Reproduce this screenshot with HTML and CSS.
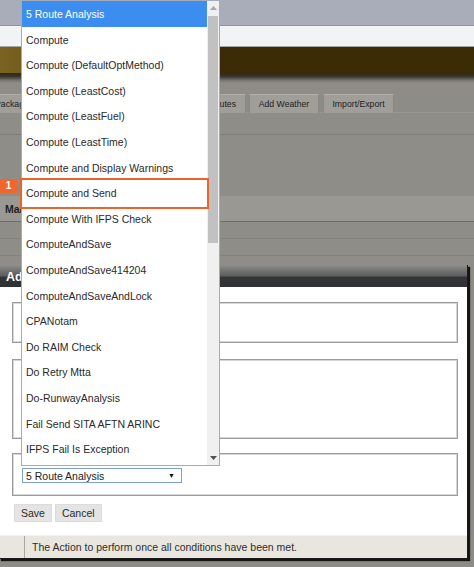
FILE: index.html
```html
<!DOCTYPE html>
<html>
<head>
<meta charset="utf-8">
<link rel="stylesheet" href="styles.css">
</head>
<body>
<div class="page">
  <div class="topbar"></div>
  <div class="lightbar"></div>
  <div class="brandbar"></div>
  <div class="brandfade"></div>
  <div class="tabstrip">
    <div class="tab tab-a">Packages</div>
    <div class="tab tab-b">Flight Plans</div>
    <div class="tab tab-c">Compare Routes</div>
    <div class="tab tab-d">Add Weather</div>
    <div class="tab tab-e">Import/Export</div>
  </div>
  <div class="content">
    <div class="subbar"></div>
    <div class="badge-row"><span class="badge">1</span></div>
    <div class="grid-head">Manage Actions</div>
    <div class="grid-row"></div>
    <div class="grid-row"></div>
  </div>
</div>

<div class="dialog">
  <div class="dialog-title">Add Action</div>
  <div class="dialog-body">
    <div class="box box-1"></div>
    <div class="box box-2"></div>
    <div class="box box-3">
      <div class="select">
        <span>5 Route Analysis</span>
        <span class="select-arrow">&#9660;</span>
      </div>
    </div>
    <div class="buttons">
      <button class="btn">Save</button>
      <button class="btn">Cancel</button>
    </div>
  </div>
  <div class="status">
    <div class="status-cell"></div>
    <div class="status-text">The Action to perform once all conditions have been met.</div>
  </div>
</div>

<div class="dropdown">
  <div class="options">
    <div class="opt selected">5 Route Analysis</div>
    <div class="opt">Compute</div>
    <div class="opt">Compute (DefaultOptMethod)</div>
    <div class="opt">Compute (LeastCost)</div>
    <div class="opt">Compute (LeastFuel)</div>
    <div class="opt">Compute (LeastTime)</div>
    <div class="opt">Compute and Display Warnings</div>
    <div class="opt">Compute and Send</div>
    <div class="opt">Compute With IFPS Check</div>
    <div class="opt">ComputeAndSave</div>
    <div class="opt">ComputeAndSave414204</div>
    <div class="opt">ComputeAndSaveAndLock</div>
    <div class="opt">CPANotam</div>
    <div class="opt">Do RAIM Check</div>
    <div class="opt">Do Retry Mtta</div>
    <div class="opt">Do-RunwayAnalysis</div>
    <div class="opt">Fail Send SITA AFTN ARINC</div>
    <div class="opt">IFPS Fail Is Exception</div>
  </div>
  <div class="scrollbar">
    <svg class="arrow-up" width="7" height="4" viewBox="0 0 7 4"><path d="M0 4 L3.5 0 L7 4 Z" fill="#a8a8a8"/></svg>
    <div class="thumb"></div>
    <svg class="arrow-down" width="7" height="4" viewBox="0 0 7 4"><path d="M0 0 L3.5 4 L7 0 Z" fill="#505050"/></svg>
  </div>
</div>

<div class="callout"></div>
</body>
</html>
```

FILE: styles.css
```css
html, body {
  margin: 0;
  padding: 0;
}
body {
  width: 474px;
  height: 567px;
  overflow: hidden;
  position: relative;
  background: #8e8c87;
  font-family: "Liberation Sans", Arial, sans-serif;
  font-size: 10.5px;
  color: #2e2e2e;
}
.page {
  width: 474px;
}
.topbar {
  height: 25px;
  background: #a9adb9;
}
.lightbar {
  height: 20px;
  background: #f2f3f5;
  border-top: 1px solid #8f939c;
  border-bottom: 1px solid #a6a6a4;
}
.brandbar {
  height: 26px;
  background: linear-gradient(90deg, #7a6320 0, #5a4610 25%, #3b2c07 45%, #3b2c06 100%);
}
.brandfade {
  height: 10px;
  background: linear-gradient(180deg, #2d281c 0, #3a3630 35%, #7a776f 75%, #8e8c87 100%);
}
.tabstrip {
  height: 30px;
  box-sizing: border-box;
  padding-top: 11px;
  display: flex;
  gap: 3px;
  margin-left: -16px;
  background: #8e8c87;
  border-bottom: 1px solid #9a9893;
}
.tab {
  height: 19px;
  box-sizing: border-box;
  background: #a09e99;
  border: 1px solid #8a8883;
  border-bottom: none;
  border-top-color: #b0aea9;
  font-size: 8.7px;
  color: #222;
  line-height: 18px;
  text-align: center;
  white-space: nowrap;
  overflow: hidden;
}
.tab-a { width: 60px; text-align: left; padding-left: 10px; }
.tab-b { width: 85px; }
.tab-c { width: 111px; text-align: right; padding-right: 9px; }
.tab-d { width: 70px; }
.tab-e { width: 71px; margin-left: 1px; }

.content {
  height: 152px;
  background: #8f8d88;
}
.subbar {
  height: 21px;
  border-bottom: 1px solid #7f7d78;
}
.badge-row {
  margin-top: 44px;
  height: 14px;
}
.badge {
  display: block;
  width: 17px;
  height: 14px;
  background: #f0662b;
  color: #fff;
  font-weight: bold;
  font-size: 10px;
  line-height: 14px;
  text-align: center;
}
.grid-head {
  margin-top: 3px;
  height: 25px;
  background: #9a9893;
  border-bottom: 1px solid #6f6d69;
  font-weight: bold;
  color: #1e1e1e;
  padding-left: 5px;
  line-height: 27px;
  white-space: nowrap;
}
.grid-row {
  height: 16px;
  border-bottom: 1px solid #84827d;
}

.dialog {
  position: absolute;
  left: -1px;
  top: 265px;
  width: 467px;
  background: #fff;
  border-left: 1px solid #4a4a4a;
  border-right: 1px solid #1a1a1a;
  border-bottom: 1px solid #1a1a1a;
  box-shadow: 2px 2px 1px rgba(0, 0, 0, 0.85);
}
.dialog-title {
  height: 22px;
  background: linear-gradient(180deg, #8e8e8c 0, #7a7a79 18%, #5c5c5c 50%, #343537 55%, #303133 100%);
  color: #fff;
  font-weight: bold;
  font-size: 12.5px;
  line-height: 24px;
  padding-left: 6px;
}
.dialog-body {
  padding: 15px 9px 13px 12px;
}
.box {
  box-sizing: border-box;
  border: 1px solid #9c9c9c;
  box-shadow: inset 0 0 0 1px #d6d6d6;
}
.box-1 { height: 41px; }
.box-2 { height: 80px; margin-top: 16px; }
.box-3 { height: 43px; margin-top: 14px; padding: 14px 0 0 9px; }
.select {
  width: 160px;
  height: 15px;
  box-sizing: border-box;
  border: 1px solid #7d9fd6;
  display: flex;
  align-items: center;
  justify-content: space-between;
  padding: 0 6px 0 3px;
  color: #222;
}
.select-arrow {
  font-size: 7px;
  color: #111;
}
.buttons {
  margin-top: 8px;
  display: flex;
  gap: 3px;
  padding-left: 2px;
}
.btn {
  height: 18px;
  margin: 0;
  padding: 0 6px;
  background: #e4e4e4;
  border: 1px solid #dcdcdc;
  font-family: "Liberation Sans", Arial, sans-serif;
  font-size: 10.5px;
  color: #2a2a2a;
  border-radius: 0;
}
.status {
  height: 22px;
  display: flex;
  background: #e8e6de;
  border-top: 1px solid #f4f3ee;
}
.status-cell {
  width: 24px;
  border-right: 1px solid #a9a79f;
}
.status-text {
  padding-left: 7px;
  line-height: 22px;
  color: #2e2e2e;
}

.dropdown {
  position: absolute;
  left: 21px;
  top: 0;
  width: 199px;
  height: 466px;
  box-sizing: border-box;
  background: #fff;
  border: 1px solid #a4abbd;
  overflow: hidden;
}
.options {
  width: 185px;
}
.opt {
  height: 25.6px;
  line-height: 27px;
  padding-left: 4px;
  white-space: nowrap;
  color: #2a2a2a;
}
.opt.selected {
  background: #3c8df0;
  color: #fff;
}
.scrollbar {
  position: absolute;
  right: 0;
  top: 0;
  bottom: 0;
  width: 12px;
  background: #f0f0f0;
}
.arrow-up {
  position: absolute;
  left: 3px;
  top: 5px;
}
.arrow-down {
  position: absolute;
  left: 3px;
  bottom: 5px;
}
.thumb {
  position: absolute;
  left: 1px;
  top: 15px;
  width: 10px;
  height: 227px;
  background: #c1c1c1;
}
.callout {
  position: absolute;
  left: 20px;
  top: 178px;
  width: 189px;
  height: 31px;
  box-sizing: border-box;
  border: 2px solid #e9652c;
}
```
